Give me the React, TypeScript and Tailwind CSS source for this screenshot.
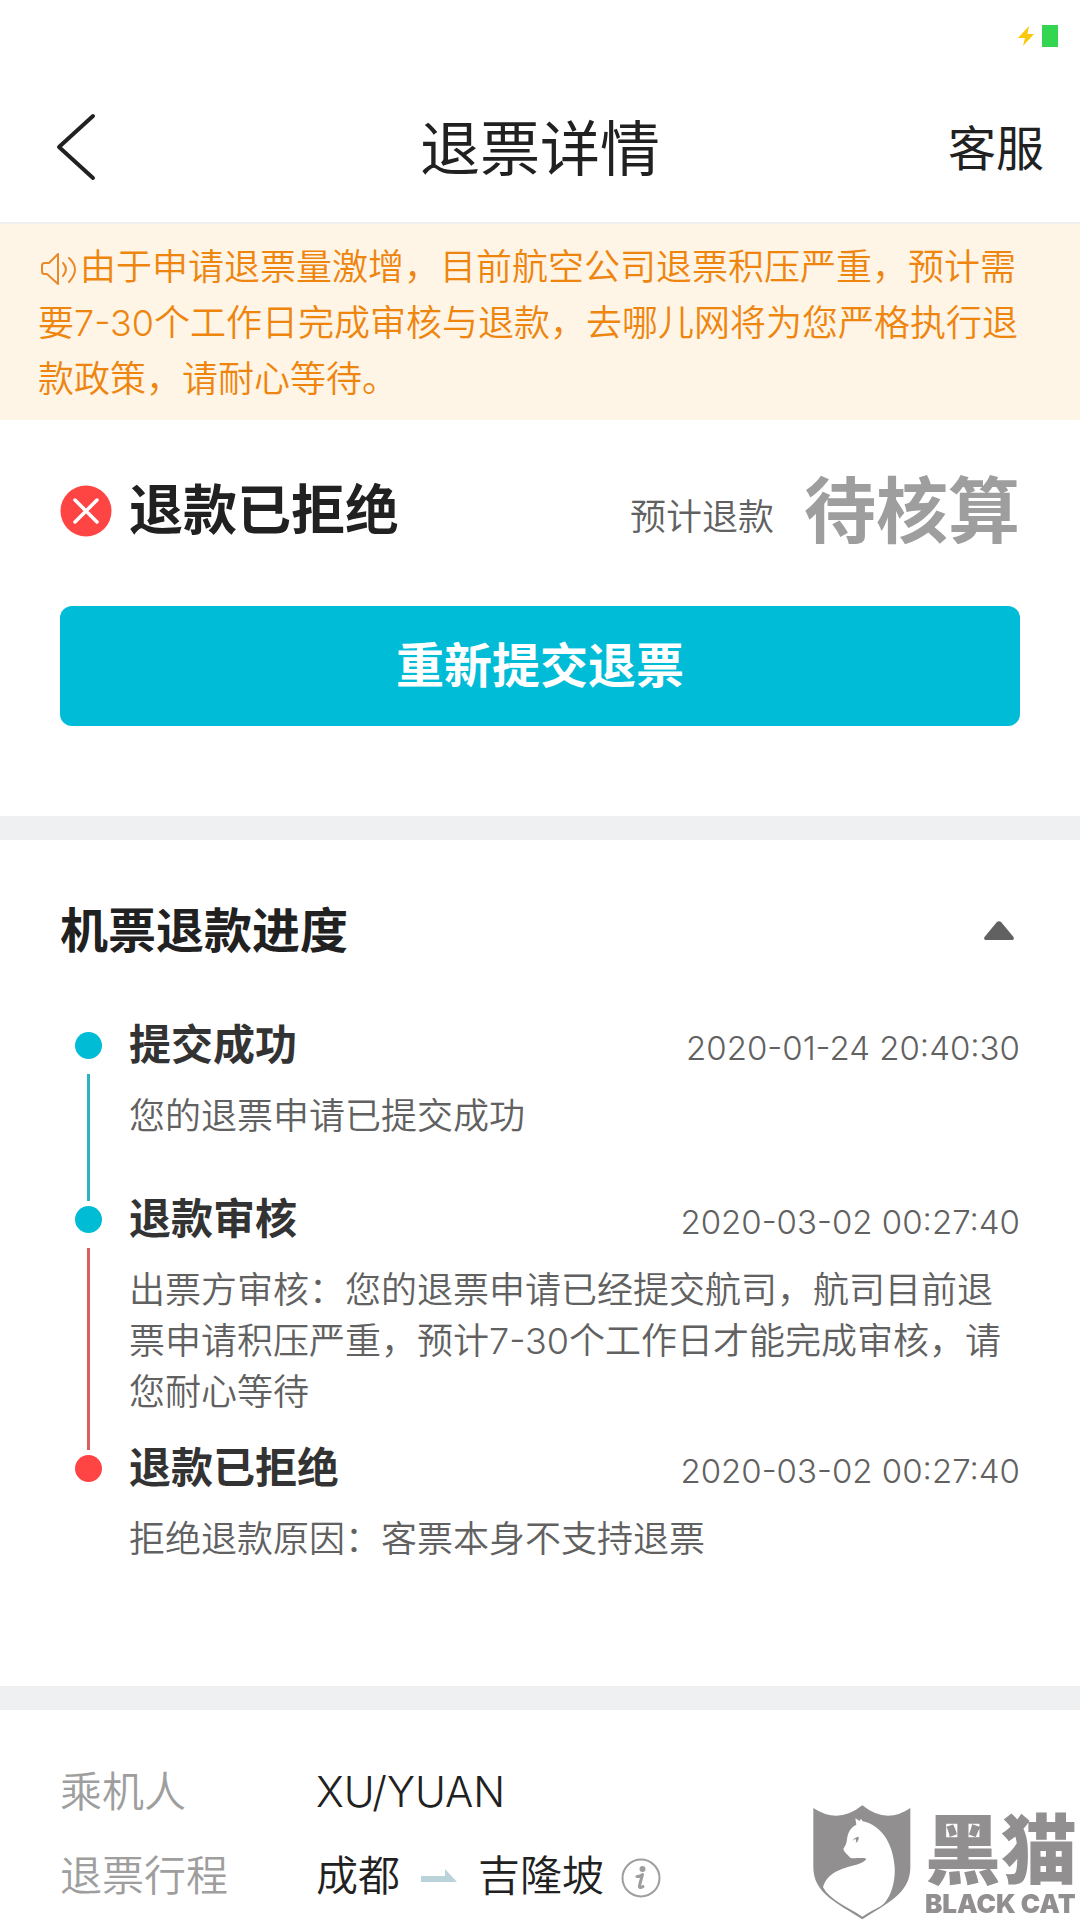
import React, { useState } from 'react';

type Step = {
  title: string;
  time: string;
  desc: string;
  dot: string;
  line?: string;
};

const steps: Step[] = [
  {
    title: '提交成功',
    time: '2020-01-24 20:40:30',
    desc: '您的退票申请已提交成功',
    dot: 'bg-[#00bcd5]',
    line: 'bg-[#2cb3bf]',
  },
  {
    title: '退款审核',
    time: '2020-03-02 00:27:40',
    desc: '出票方审核：您的退票申请已经提交航司，航司目前退票申请积压严重，预计7-30个工作日才能完成审核，请您耐心等待',
    dot: 'bg-[#00bcd5]',
    line: 'bg-[#d95f5f]',
  },
  {
    title: '退款已拒绝',
    time: '2020-03-02 00:27:40',
    desc: '拒绝退款原因：客票本身不支持退票',
    dot: 'bg-[#ff4444]',
  },
];

const StatusBar: React.FC = () => (
  <div className="flex h-[76px] items-start justify-end gap-2 px-[22px] pt-[25px]">
    <svg className="h-[22px] w-4" viewBox="0 0 16 22" aria-hidden="true">
      <path d="M11 1 L0 13 H7 L5 21 L16 9 H9.500 Z" fill="#fbc70b" />
    </svg>
    <div className="h-[22px] w-4 bg-[#33d650]" />
  </div>
);

const Header: React.FC = () => (
  <header className="grid h-[148px] grid-cols-[1fr_auto_1fr] items-center border-b-2 border-[#f0f0f0] px-9 text-[#212121]">
    <button type="button" aria-label="返回" className="justify-self-start pb-1 pl-5">
      <svg className="h-[68px] w-10" viewBox="0 0 40 68" fill="none" aria-hidden="true">
        <path
          d="M37 3 L3 34 L37 65"
          stroke="#212121"
          strokeWidth="4"
          strokeLinecap="round"
          strokeLinejoin="round"
        />
      </svg>
    </button>
    <h1 className="text-[60px] leading-[72px]">退票详情</h1>
    <a href="#service" className="justify-self-end text-[48px] leading-[72px]">
      客服
    </a>
  </header>
);

const Notice: React.FC = () => (
  <p className="bg-[#fff5e6] px-[38px] pt-[15px] pb-[13px] text-[36px] leading-[56px] font-[350] text-[#ee850f]">
    <svg
      className="inline-block h-9 w-[42px] align-[-7px]"
      viewBox="0 0 42 36"
      fill="none"
      stroke="#e8892a"
      strokeWidth="2"
      strokeLinecap="round"
      strokeLinejoin="round"
      aria-hidden="true"
    >
      <path d="M20 3 L11 12 H6.500 Q4 12 4 14.500 V20.500 Q4 23 6.500 23 H9 L20 33 Z" />
      <path d="M25 12 Q31 18 25 25" />
      <path d="M31 7 Q43 18 31 31" />
    </svg>
    由于申请退票量激增，目前航空公司退票积压严重，预计需要7-30个工作日完成审核与退款，去哪儿网将为您严格执行退款政策，请耐心等待。
  </p>
);

const RefundStatus: React.FC = () => (
  <section className="px-[60px] pt-[46px] pb-[90px]">
    <div className="flex h-[90px] items-center">
      <svg className="size-[52px]" viewBox="0 0 52 52" aria-hidden="true">
        <circle cx="26" cy="26" r="25.500" fill="#ff4444" />
        <path d="M15 15 L37 37 M37 15 L15 37" stroke="#fff" strokeWidth="3.500" strokeLinecap="round" />
      </svg>
      <h2 className="ml-[17px] text-[54px] leading-[72px] font-bold text-[#212121]">退款已拒绝</h2>
      <div className="ml-auto flex items-center gap-[30px]">
        <span className="pt-3 text-[36px] leading-[72px] font-[350] text-[#616161]">预计退款</span>
        <strong className="text-[72px] leading-[72px] font-bold text-[#9e9e9e]">待核算</strong>
      </div>
    </div>
    <button
      type="button"
      className="mt-[50px] h-[120px] w-full rounded-xl bg-[#00bcd7] text-[48px] leading-[72px] font-bold text-white"
    >
      重新提交退票
    </button>
  </section>
);

const StepItem: React.FC<{ step: Step }> = ({ step }) => (
  <li className="flex min-h-[174px] gap-[27px] pl-[15px]">
    <div className="flex w-[27px] shrink-0 flex-col items-center pt-[17px]">
      <span className={`size-[27px] rounded-full ${step.dot}`} />
      {/* the rail runs on a little way into the next step */}
      {step.line && <span className={`mt-[15px] -mb-3 w-[3px] flex-1 ${step.line}`} />}
    </div>
    <div className="min-w-0 flex-1 pb-5">
      <div className="flex items-center justify-between">
        <h3 className="text-[42px] leading-[60px] font-bold text-[#333]">{step.title}</h3>
        <time className="pt-[6px] text-[33px] leading-[52px] font-[350] text-[#616161]">{step.time}</time>
      </div>
      <p className="mt-4 text-[36px] leading-[51px] font-[350] text-[#616161]">{step.desc}</p>
    </div>
  </li>
);

const RefundProgress: React.FC = () => {
  const [open, setOpen] = useState(true);

  return (
    <section className="px-[60px] pt-[55px] pb-[74px]">
      <button
        type="button"
        onClick={() => setOpen(!open)}
        aria-expanded={open}
        className="flex w-full items-center justify-between pr-[6px] text-[#212121]"
      >
        <span className="text-[48px] leading-[72px] font-bold">机票退款进度</span>
        <svg
          className={`h-5 w-[30px] ${open ? '' : 'rotate-180'}`}
          viewBox="0 0 30 20"
          aria-hidden="true"
        >
          <path
            d="M12.500 1.500 Q15 -1 17.500 1.500 L29.500 16 Q30.500 19 28 19 H2 Q-.5 19 .5 16 Z"
            fill="#616161"
          />
        </svg>
      </button>
      {open && (
        <ol className="mt-12">
          {steps.map((step) => (
            <StepItem key={step.title} step={step} />
          ))}
        </ol>
      )}
    </section>
  );
};

const TripInfo: React.FC = () => (
  <dl className="px-[60px] pt-10 text-[42px] leading-[60px] font-[350]">
    <div className="flex h-[84px] items-center">
      <dt className="w-64 text-[#9e9e9e]">乘机人</dt>
      <dd className="text-[#212121]">XU/YUAN</dd>
    </div>
    <div className="flex h-[84px] items-center">
      <dt className="w-64 text-[#9e9e9e]">退票行程</dt>
      <dd className="flex items-center text-[#212121]">
        成都
        <svg className="mx-[21px] h-[14px] w-9" viewBox="0 0 36 14" aria-hidden="true">
          <path d="M0 7 H24 V0 L36 13 H0 Z" fill="#bad3da" />
        </svg>
        吉隆坡
        <button type="button" aria-label="行程说明" className="ml-[17px] pt-1">
          <svg className="size-10" viewBox="0 0 40 40" fill="none" aria-hidden="true">
            <circle cx="20" cy="20" r="18.500" stroke="#9e9e9e" strokeWidth="2" />
            <circle cx="21.500" cy="11" r="3" fill="#9e9e9e" />
            <path
              d="M16 18.500 Q20 18.500 21.500 16.500 L18.500 27.500 Q18 31 22 28.500"
              stroke="#9e9e9e"
              strokeWidth="3"
              strokeLinecap="round"
              strokeLinejoin="round"
            />
          </svg>
        </button>
      </dd>
    </div>
  </dl>
);

const BlackCatMark: React.FC = () => (
  <div className="pointer-events-none fixed right-0 bottom-0 flex items-end gap-[14px] pr-[3px] text-[#918f90]">
    <svg className="h-[115px] w-[98px]" viewBox="92 75 294 345" aria-hidden="true">
      <path
        d="M93 84 Q168 134 240 76 Q312 134 384 84 V262 C384 342 310 372 240 418 C170 372 93 342 93 262 Z"
        fill="#918f90"
      />
      <path
        d="M122 322 C136 276 180 266 215 256 C236 250 246 246 252 236 C238 232 218 237 205 234 C197 224 185 217 183 206 C191 196 192 190 194 178 C196 155 208 140 222 134 L219 115 L232 123 L236 116 L241 124 C292 134 332 184 337 262 C340 310 322 362 296 378 C278 388 258 397 240 410 C196 380 144 362 122 322 Z"
        fill="#fff"
      />
      <path d="M211 182 Q216 172 229 170 Q230 184 220 188 Q224 180 219 176 Q214 180 211 182 Z" fill="#918f90" />
    </svg>
    <div className="flex flex-col pb-1">
      <span className="text-[76px] leading-[84px] font-black">黑猫</span>
      <span className="text-[26px] leading-6 font-black">BLACK CAT</span>
    </div>
  </div>
);

const App: React.FC = () => {
  return (
    <div className="min-h-screen bg-white font-['Inter','Noto_Sans_CJK_SC',sans-serif]" lang="zh-CN">
      <StatusBar />
      <Header />
      <main>
        <Notice />
        <RefundStatus />
        <div className="h-6 bg-[#eff0f2]" />
        <RefundProgress />
        <div className="h-6 bg-[#eff0f2]" />
        <TripInfo />
      </main>
      <BlackCatMark />
    </div>
  );
};

export default App;
